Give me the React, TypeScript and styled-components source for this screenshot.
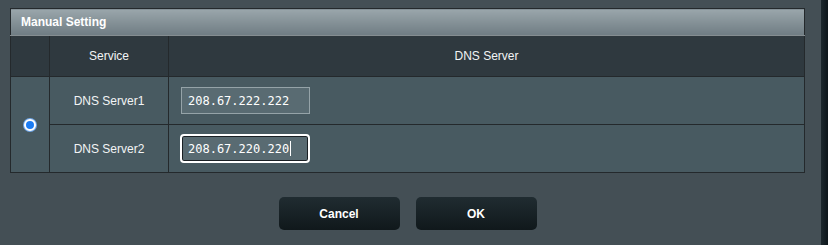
import React from 'react';
import styled, { createGlobalStyle } from 'styled-components';

const GlobalStyle = createGlobalStyle`
  html, body {
    margin: 0;
    padding: 0;
    background: #444f55;
  }
  body {
    font-family: 'Liberation Sans', Arial, sans-serif;
  }
`;

const Page = styled.div`
  display: flex;
  width: 828px;
  height: 245px;
  overflow: hidden;
`;

const Main = styled.div`
  flex: 1;
  padding: 8px 16px 0 10px;
  display: flex;
  flex-direction: column;
`;

const SideStrip = styled.div`
  width: 8px;
  background: linear-gradient(to right, #1c282e, #0c151a);
`;

const Table = styled.table`
  width: 795px;
  border-collapse: collapse;
  border: 1px solid #24292c;
  color: #f2f4f5;
  font-size: 12px;
`;

const TitleCell = styled.th`
  height: 26px;
  padding: 0 0 0 10px;
  text-align: left;
  font-weight: bold;
  font-size: 12px;
  color: #ffffff;
  background: linear-gradient(to bottom, #9aa6ab, #6f7c83);
  border-bottom: 1px solid #858d91;
`;

const HeadCell = styled.th<{ $w?: string }>`
  height: 40px;
  padding: 0;
  font-weight: normal;
  background: #2f393f;
  border: 1px solid #24292c;
  width: ${(p) => p.$w || 'auto'};
`;

const Cell = styled.td`
  height: 47px;
  padding: 0 0 0 12px;
  background: #485a61;
  border: 1px solid #24292c;
  text-align: left;
`;

const LabelCell = styled(Cell)`
  padding: 0;
  text-align: center;
`;

const RadioCell = styled.td`
  padding: 0;
  background: #485a61;
  border: 1px solid #24292c;
  text-align: center;
  vertical-align: middle;
`;

const Radio = styled.span`
  display: inline-block;
  width: 8px;
  height: 8px;
  border-radius: 50%;
  background: #1b7cf4;
  border: 2px solid #ffffff;
  box-shadow: 0 0 0 1px #6fa6e8;
  vertical-align: middle;
`;

const AddrInput = styled.input`
  box-sizing: border-box;
  width: 129px;
  height: 27px;
  padding: 0 0 0 6px;
  font-family: 'DejaVu Sans Mono', monospace;
  font-size: 12px;
  color: #ffffff;
  background: #596b72;
  border: 1px solid #95a3a8;
  border-radius: 0;
  outline: none;
`;

const FocusedInput = styled.div`
  box-sizing: border-box;
  width: 130px;
  height: 29px;
  margin-left: -1px;
  padding: 0 0 0 6px;
  display: flex;
  align-items: center;
  font-family: 'DejaVu Sans Mono', monospace;
  font-size: 12px;
  color: #ffffff;
  background: #596b72;
  border: 2px solid #ffffff;
  border-radius: 4px;
  box-shadow: inset 0 0 0 1px #1a2024;
  white-space: pre;
`;

const Caret = styled.span`
  display: inline-block;
  width: 1px;
  height: 15px;
  background: #ffffff;
  margin-left: 1px;
`;

const ButtonRow = styled.div`
  width: 795px;
  display: flex;
  justify-content: center;
  gap: 16px;
  margin-top: 24px;
`;

const Button = styled.button`
  width: 121px;
  height: 33px;
  border: none;
  border-radius: 5px;
  background: linear-gradient(to bottom, #202c31, #10181b);
  color: #ffffff;
  font-family: 'Liberation Sans', Arial, sans-serif;
  font-weight: bold;
  font-size: 12px;
  cursor: pointer;
`;

const App: React.FC = () => {
  return (
    <Page>
      <GlobalStyle />
      <Main>
        <Table>
          <thead>
            <tr>
              <TitleCell colSpan={3}>Manual Setting</TitleCell>
            </tr>
            <tr>
              <HeadCell $w="38px"></HeadCell>
              <HeadCell $w="118px">Service</HeadCell>
              <HeadCell>DNS Server</HeadCell>
            </tr>
          </thead>
          <tbody>
            <tr>
              <RadioCell rowSpan={2}>
                <Radio />
              </RadioCell>
              <LabelCell>DNS Server1</LabelCell>
              <Cell>
                <AddrInput defaultValue="208.67.222.222" readOnly />
              </Cell>
            </tr>
            <tr>
              <LabelCell>DNS Server2</LabelCell>
              <Cell>
                <FocusedInput>
                  208.67.220.220
                  <Caret />
                </FocusedInput>
              </Cell>
            </tr>
          </tbody>
        </Table>
        <ButtonRow>
          <Button>Cancel</Button>
          <Button>OK</Button>
        </ButtonRow>
      </Main>
      <SideStrip />
    </Page>
  );
};

export default App;
